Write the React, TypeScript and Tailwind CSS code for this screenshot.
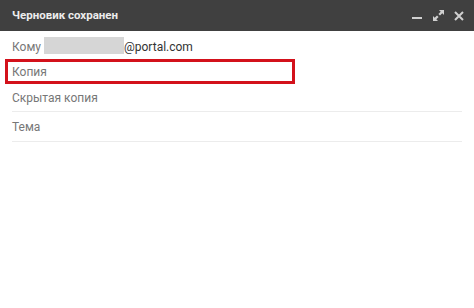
export default function App() {
  return (
    <div className="h-[308px] w-[474px] overflow-hidden bg-white font-['Roboto','Liberation_Sans',sans-serif]">
      <header className="flex h-[31px] items-center justify-between bg-[#404040] pl-3 pr-[10px]">
        <h1 className="text-[11.5px] font-bold text-[#ececec]">Черновик сохранен</h1>
        <div className="flex items-center gap-[10px] text-[#d0d0d0]">
          <svg width="11" height="11" viewBox="0 0 11 11">
            <rect x="0" y="7" width="10" height="2" fill="currentColor" />
          </svg>
          <svg width="11" height="11" viewBox="0 0 11 11" fill="currentColor">
            <path d="M6 0h5v5L9.3 3.3 7 5.6 5.4 4 7.7 1.7z" />
            <path d="M0 6l1.7 1.7L4 5.4 5.6 7 3.3 9.3 5 11H0z" />
          </svg>
          <svg width="10" height="10" viewBox="0 0 10 10" stroke="currentColor" strokeWidth="2">
            <path d="M1 1l8 8M9 1l-8 8" />
          </svg>
        </div>
      </header>
      <div className="px-3 text-[12px] text-[#777]">
        <div className="flex h-[28px] items-center">
          <span className="pt-[3px]">Кому</span>
          <span className="ml-[3px] h-[17px] w-[80px] bg-[#d6d6d6]" />
          <span className="pt-[3px] text-[#333]">@portal.com</span>
        </div>
        <div className="-ml-[7px] flex h-[25px] w-[290px] items-center border-[3px] border-[#d3111b] pl-[4px]">
          Копия
        </div>
        <div className="flex h-[28px] items-center border-b border-[#ececec]">Скрытая копия</div>
        <div className="flex h-[30px] items-center border-b border-[#ececec]">Тема</div>
      </div>
    </div>
  );
}
